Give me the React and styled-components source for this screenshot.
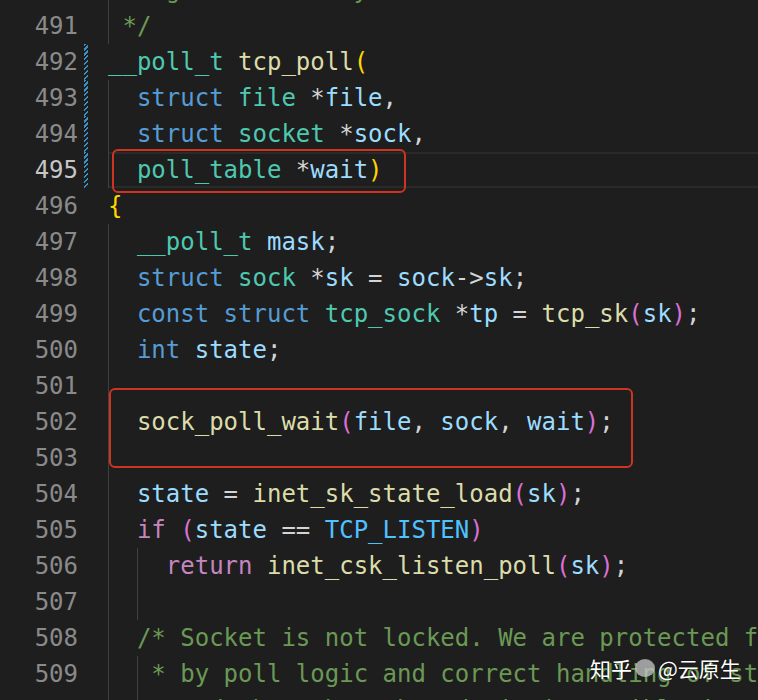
import React from 'react';
import styled, { createGlobalStyle } from 'styled-components';

const GlobalStyle = createGlobalStyle`
  html, body {
    margin: 0;
    padding: 0;
    background: #1e1e1e;
  }
`;

const colors = {
  kw: '#569cd6',
  type: '#4ec9b0',
  var: '#9cdcfe',
  fn: '#dcdcaa',
  op: '#d4d4d4',
  gold: '#ffd700',
  purple: '#da70d6',
  ctrl: '#c586c0',
  const: '#4fc1ff',
  cm: '#6a9955',
};

const Editor = styled.div`
  position: relative;
  display: flex;
  width: 758px;
  height: 700px;
  overflow: hidden;
  background: #1e1e1e;
`;

const Lines = styled.div`
  flex: 1;
  margin-top: -28px;
`;

const ScrollEdge = styled.div`
  width: 3px;
  border-left: 1px solid #141414;
  background: #262626;
`;

const Row = styled.div`
  display: flex;
  height: 36px;
  line-height: 36px;
  font-family: 'DejaVu Sans Mono', 'Liberation Mono', monospace;
  font-size: 24px;
`;

const LineNo = styled.div`
  width: 78px;
  text-align: right;
  color: ${(p) => (p.$current ? '#c6c6c6' : '#8a8a8a')};
`;

const Gutter = styled.div`
  width: 30px;
  display: flex;
`;

const GitMark = styled.div`
  width: 4px;
  margin-left: 6px;
  background: ${(p) =>
    p.$changed
      ? 'repeating-linear-gradient(135deg, #3a8fc4 0 1.5px, #1e1e1e 1.5px 3.5px)'
      : 'transparent'};
`;

const Code = styled.div`
  flex: 1;
  white-space: pre;
  color: ${colors.op};
  box-shadow: ${(p) =>
    p.$current ? 'inset 0 2px 0 #2a2a2a, inset 0 -2px 0 #2a2a2a' : 'none'};
`;

const Tok = styled.span`
  color: ${(p) => p.$c || colors.op};
`;

const Guide = styled.span`
  display: inline-block;
  height: 36px;
  vertical-align: top;
  box-shadow: inset 1px 0 0 #404040;
`;

const Mark = styled.div`
  position: absolute;
  border: 2px solid #cf3420;
  border-radius: 6px;
  pointer-events: none;
`;

const Watermark = styled.div`
  position: absolute;
  left: 590px;
  top: 653px;
  display: flex;
  align-items: center;
  gap: 3px;
  font-family: 'Noto Sans CJK SC', 'Noto Sans', sans-serif;
  font-size: 21px;
  color: #ffffff;
  text-shadow: 0 0 2px rgba(0, 0, 0, 0.6);
`;

const WeChatDot = styled.span`
  display: inline-block;
  width: 20px;
  height: 18px;
  border-radius: 50%;
  background: rgba(200, 200, 200, 0.75);
`;

const G = (s) => ({ g: true, t: s });
const T = (t, c) => ({ t, c });
const sp = T(' ');

const lines = [
  { n: 490, code: [G(' '), T('*  go look at any of the socket buffers directly.', colors.cm)] },
  { n: 491, code: [G(' '), T('*/', colors.cm)] },
  { n: 492, git: true, code: [T('__poll_t', colors.type), sp, T('tcp_poll', colors.fn), T('(', colors.gold)] },
  { n: 493, git: true, code: [G('  '), T('struct', colors.kw), sp, T('file', colors.type), sp, T('*'), T('file', colors.var), T(',')] },
  { n: 494, git: true, code: [G('  '), T('struct', colors.kw), sp, T('socket', colors.type), sp, T('*'), T('sock', colors.var), T(',')] },
  { n: 495, git: true, current: true, code: [G('  '), T('poll_table', colors.type), sp, T('*'), T('wait', colors.var), T(')', colors.gold)] },
  { n: 496, code: [T('{', colors.gold)] },
  { n: 497, code: [G('  '), T('__poll_t', colors.type), sp, T('mask', colors.var), T(';')] },
  { n: 498, code: [G('  '), T('struct', colors.kw), sp, T('sock', colors.type), sp, T('*'), T('sk', colors.var), T(' = '), T('sock', colors.var), T('->'), T('sk', colors.var), T(';')] },
  { n: 499, code: [G('  '), T('const', colors.kw), sp, T('struct', colors.kw), sp, T('tcp_sock', colors.type), sp, T('*'), T('tp', colors.var), T(' = '), T('tcp_sk', colors.fn), T('(', colors.purple), T('sk', colors.var), T(')', colors.purple), T(';')] },
  { n: 500, code: [G('  '), T('int', colors.kw), sp, T('state', colors.var), T(';')] },
  { n: 501, code: [G('  ')] },
  { n: 502, code: [G('  '), T('sock_poll_wait', colors.fn), T('(', colors.purple), T('file', colors.var), T(', '), T('sock', colors.var), T(', '), T('wait', colors.var), T(')', colors.purple), T(';')] },
  { n: 503, code: [G('  ')] },
  { n: 504, code: [G('  '), T('state', colors.var), T(' = '), T('inet_sk_state_load', colors.fn), T('(', colors.purple), T('sk', colors.var), T(')', colors.purple), T(';')] },
  { n: 505, code: [G('  '), T('if', colors.ctrl), sp, T('(', colors.purple), T('state', colors.var), T(' == '), T('TCP_LISTEN', colors.const), T(')', colors.purple)] },
  { n: 506, code: [G('  '), G('  '), T('return', colors.ctrl), sp, T('inet_csk_listen_poll', colors.fn), T('(', colors.purple), T('sk', colors.var), T(')', colors.purple), T(';')] },
  { n: 507, code: [G('  '), G('  ')] },
  { n: 508, code: [G('  '), T('/* Socket is not locked. We are protected from async events', colors.cm)] },
  { n: 509, code: [G('  '), G(' '), T('* by poll logic and correct handling of state changes', colors.cm)] },
  { n: 510, code: [G('  '), G(' '), T('* made by other threads is impossible in this case.', colors.cm)] },
];

function CodeLine({ line }) {
  return (
    <Row>
      <LineNo $current={line.current}>{line.n}</LineNo>
      <Gutter>
        <GitMark $changed={line.git} />
      </Gutter>
      <Code $current={line.current}>
        {line.code.map((tok, i) =>
          tok.g ? (
            <Guide key={i}>{tok.t}</Guide>
          ) : (
            <Tok key={i} $c={tok.c}>{tok.t}</Tok>
          )
        )}
      </Code>
    </Row>
  );
}

export default function App() {
  return (
    <>
      <GlobalStyle />
      <Editor>
        <Lines>
          {lines.map((line) => (
            <CodeLine key={line.n} line={line} />
          ))}
        </Lines>
        <ScrollEdge />
        <Mark style={{ left: 112, top: 149, width: 290, height: 40 }} />
        <Mark style={{ left: 109, top: 388, width: 520, height: 76 }} />
        <Watermark>
          <span>知乎</span>
          <WeChatDot />
          <span>@云原生</span>
        </Watermark>
      </Editor>
    </>
  );
}
